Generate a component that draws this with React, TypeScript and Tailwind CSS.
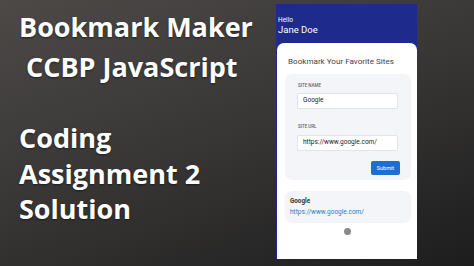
import React from "react";

export default function App() {
  return (
    <div className="w-[474px] h-[266px] overflow-hidden flex bg-[linear-gradient(160deg,#4c4947_0%,#3a3837_45%,#1d1d1d_100%)]">
      <div
        className="w-[276px] shrink-0 pl-[19px] text-white font-bold"
        style={{ fontFamily: '"Open Sans", sans-serif' }}
      >
        <div className="text-[27px] leading-[40px] pt-[7px] [text-shadow:0_1px_2px_rgba(0,0,0,0.5)]">
          <div>Bookmark Maker</div>
          <div className="pl-[7px]">CCBP JavaScript</div>
        </div>
        <div className="text-[27px] leading-[35.5px] mt-[33px] [text-shadow:0_1px_2px_rgba(0,0,0,0.5)]">
          <div>Coding</div>
          <div>Assignment 2</div>
          <div>Solution</div>
        </div>
      </div>
      <div
        className="mt-[4px] w-[141px] h-[255px] bg-[#1e2b8c] flex flex-col"
        style={{ fontFamily: "Roboto, sans-serif" }}
      >
        <div className="h-[39px] pl-[2px] pt-[12px] text-white">
          <div className="text-[6.5px] leading-[8px]">Hello</div>
          <div className="text-[9.5px] leading-[12px]">Jane Doe</div>
        </div>
        <div className="flex-1 bg-white rounded-t-[7px] ml-[1px] pl-[8px] pr-[6px]">
          <div className="pl-[3px] pt-[13px] text-[8.1px] leading-[10px] text-[#444]">
            Bookmark Your Favorite Sites
          </div>
          <div className="mt-[8px] bg-[#f3f5f9] rounded-[7px] pl-[12px] pr-[13px] pt-[9px] pb-[5px] flex flex-col">
            <div className="text-[4.5px] leading-[5px] text-[#666] font-medium pl-[1px]">SITE NAME</div>
            <div className="mt-[5px] h-[16px] bg-white border border-[#e2e4e8] rounded-[2px] flex items-center pl-[5px] text-[6.5px] text-[#222]">
              Google
            </div>
            <div className="mt-[15px] text-[4.5px] leading-[5px] text-[#666] font-medium pl-[1px]">SITE URL</div>
            <div className="mt-[6px] h-[16px] bg-white border border-[#e2e4e8] rounded-[2px] flex items-center pl-[5px] text-[6.5px] text-[#222]">
              https://www.google.com/
            </div>
            <div className="flex justify-end -mr-[2px] mt-[10px]">
              <div className="h-[14px] w-[29px] bg-[#1f6fd1] rounded-[2px] text-white text-[5.5px] flex items-center justify-center">
                Submit
              </div>
            </div>
          </div>
          <div className="mt-[11px] bg-[#f3f5f9] rounded-[7px] h-[32px] pl-[5px] pt-[6px]">
            <div className="text-[6.3px] leading-[8px] font-bold text-[#333]">Google</div>
            <div className="text-[6.5px] leading-[8px] mt-[3px] text-[#2b7bc4]">https://www.google.com/</div>
          </div>
          <div className="flex justify-center mt-[5px] pr-[2px]">
            <div className="w-[7px] h-[7px] rounded-full bg-[#8a8a8a]"></div>
          </div>
        </div>
      </div>
    </div>
  );
}
